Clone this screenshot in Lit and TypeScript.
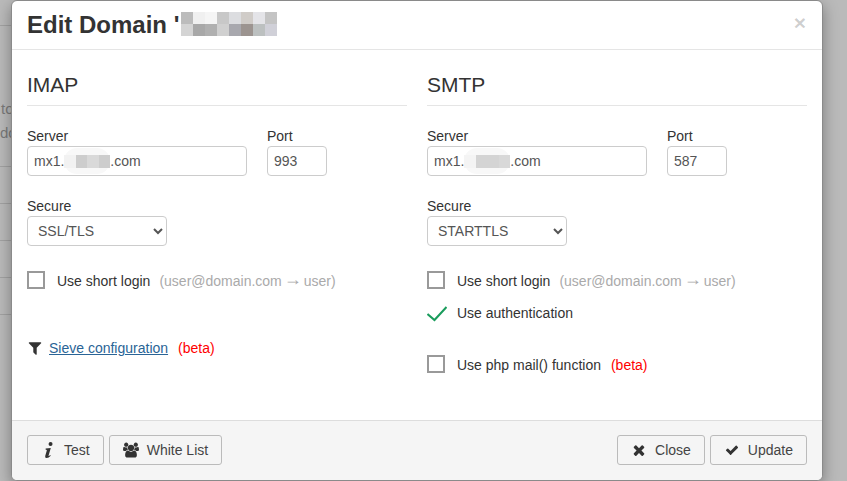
import { LitElement, html, css, svg } from "lit";
import { customElement } from "lit/decorators.js";

const ICONS: Record<string, { box: string; d: string }> = {
  times: {
    box: "0 0 1792 1792",
    d: "M1490 1322q0 40-28 68l-136 136q-28 28-68 28t-68-28l-294-294-294 294q-28 28-68 28t-68-28l-136-136q-28-28-28-68t28-68l294-294-294-294q-28-28-28-68t28-68l136-136q28-28 68-28t68 28l294 294 294-294q28-28 68-28t68 28l136 136q28 28 28 68t-28 68l-294 294 294 294q28 28 28 68z",
  },
  check: {
    box: "0 0 1792 1792",
    d: "M1671 566q0 40-28 68l-724 724-136 136q-28 28-68 28t-68-28l-136-136-362-362q-28-28-28-68t28-68l136-136q28-28 68-28t68 28l294 295 656-657q28-28 68-28t68 28l136 136q28 28 28 68z",
  },
  filter: {
    box: "0 0 1792 1792",
    d: "M1595 295q17 41-14 70l-493 493v742q0 42-39 59-13 5-25 5-27 0-45-19l-256-256q-19-19-19-45v-486l-493-493q-31-29-14-70 17-39 59-39h1280q42 0 59 39z",
  },
  info: {
    box: "0 0 18 18",
    d: "M10.6 1a2 2 0 1 1-.1 4 2 2 0 0 1 .1-4zM5.6 7.6l5.2-.6-2.2 7.4q-.2.7.4.5l1.2-.9.5.8q-2.2 2.4-4.3 2.2-1.7-.2-1.2-2l1.6-5.5q.2-.8-1-.6z",
  },
  users: {
    box: "0 0 1920 1792",
    d: "M593 896q-162 5-265 128h-134q-82 0-138-40.5t-56-118.5q0-353 124-353 6 0 43.5 21t97.5 42.5 119 21.5q67 0 133-23-5 37-5 66 0 139 81 256zm1071 637q0 120-73 189.5t-194 69.5h-874q-121 0-194-69.5t-73-189.5q0-53 3.5-103.5t14-109 26.5-108.5 43-97.5 62-81 85.5-53.5 111.5-20q10 0 43 21.5t73 48 107 48 135 21.5 135-21.5 107-48 73-48 43-21.5q61 0 111.5 20t85.5 53.5 62 81 43 97.5 26.5 108.5 14 109 3.5 103.5zm-1024-1277q0 106-75 181t-181 75-181-75-75-181 75-181 181-75 181 75 75 181zm704 384q0 159-112.5 271.5t-271.5 112.5-271.5-112.5-112.5-271.5 112.5-271.5 271.5-112.5 271.5 112.5 112.5 271.5zm576 225q0 78-56 118.5t-138 40.5h-134q-103-123-265-128 81-117 81-256 0-29-5-66 66 23 133 23 59 0 119-21.5t97.5-42.5 43.5-21q124 0 124 353zm-128-609q0 106-75 181t-181 75-181-75-75-181 75-181 181-75 181 75 75 181z",
  },
};

const icon = (name: string, cls = "") =>
  html`<svg class="fa ${name} ${cls}" viewBox=${ICONS[name].box} aria-hidden="true">${svg`<path d=${ICONS[name].d} fill="currentColor"></path>`}</svg>`;

const TITLE_MOSAIC = [
  "#bcbcbc", "#f0f0f0", "#f5f5f5", "#c8c8c8", "#dcdde0", "#d0ccc8", "#e4e4e8", "#c4c4c4",
  "#d4d4d4", "#a8a8a8", "#b0b0b0", "#d0d0d0", "#a8a8ae", "#9c9490", "#bcc0c0", "#d0d0d8",
];

const tint = (c: string) => html`<i style="background:${c}"></i>`;

@customElement("app-root")
export class AppRoot extends LitElement {
  static styles = css`
    :host {
      display: block;
      position: relative;
      width: 847px;
      height: 481px;
      overflow: hidden;
      background: #bababa;
      font-family: "Liberation Sans", Arial, sans-serif;
      font-size: 14px;
      line-height: 20px;
      color: #333;
    }
    .page { color: #7a7a7a; font-size: 15px; }
    .rule { border-top: 1px solid #a2a2a2; position: absolute; left: 0; width: 12px; }
    .behind { position: absolute; white-space: nowrap; }
    .modal {
      position: absolute;
      left: 11px;
      top: 0;
      width: 812px;
      height: 481px;
      box-sizing: border-box;
      display: flex;
      flex-direction: column;
      background: #fff;
      border: 1px solid #8a8a8a;
      border-radius: 6px;
      box-shadow: 0 5px 15px rgba(0, 0, 0, 0.35);
      overflow: hidden;
    }
    header {
      height: 48px;
      flex: none;
      border-bottom: 1px solid #e5e5e5;
      padding: 0 15px;
      display: flex;
      align-items: center;
      justify-content: space-between;
    }
    h3 { margin: 0; font-size: 24px; line-height: 24px; font-weight: 700; display: flex; align-items: center; white-space: pre; }
    .mosaic { display: grid; grid-template-columns: repeat(8, 12px); grid-auto-rows: 12px; margin: -2px 0 0 2px; }
    .mosaic i { display: block; }
    .x { font-size: 21px; font-weight: 700; color: rgba(0, 0, 0, 0.2); line-height: 20px; margin-top: -5px; margin-right: 1px; }
    main { flex: 1; display: grid; grid-template-columns: 380px 380px; column-gap: 20px; padding: 0 15px; }
    .col { display: flex; flex-direction: column; padding-top: 20px; }
    .legend { font-size: 21px; line-height: 30px; padding-bottom: 5px; border-bottom: 1px solid #e5e5e5; }
    .pair { display: flex; gap: 20px; margin-top: 20px; }
    .secure { margin-top: 20px; }
    .wide { width: 220px; }
    .narrow { width: 60px; }
    .input {
      box-sizing: border-box;
      height: 30px;
      border: 1px solid #ccc;
      border-radius: 4px;
      padding: 0 6px;
      color: #555;
      display: flex;
      align-items: center;
      white-space: pre;
    }
    .blur {
      width: 46px;
      height: 26px;
      display: flex;
      align-items: center;
      background: #f8f8f8;
      border-radius: 13px;
    }
    .blur i { display: block; flex: 1; height: 13px; }
    select {
      display: block;
      box-sizing: border-box;
      width: 140px;
      height: 30px;
      border: 1px solid #ccc;
      border-radius: 4px;
      padding: 0 6px;
      background: #fff;
      color: #555;
      font: inherit;
    }
    .row { display: flex; align-items: center; height: 20px; white-space: pre; }
    .row.first { margin-top: 25px; }
    .row.auth { margin-top: 12px; }
    .row.php { margin-top: 32px; }
    .row.sieve { margin-top: 47px; }
    .box { box-sizing: border-box; width: 18px; height: 18px; border: 2px solid #999; background: #fff; flex: none; margin: -2px 12px 0 0; }
    .tick { width: 20px; height: 16px; flex: none; margin-right: 10px; margin-top: 2px; color: #1a9c5c; }
    .note { color: #aaa; margin-left: 9px; }
    .arrow { font-size: 18px; line-height: 0; margin: 0 2px; vertical-align: 1px; }
    .beta { color: #f00; margin-left: 10px; }
    a { color: #2a6496; text-decoration: underline; }
    footer {
      flex: none;
      height: 60px;
      box-sizing: border-box;
      border-top: 1px solid #ddd;
      background: #f5f5f5;
      padding: 14px 15px 0;
      display: flex;
      gap: 5px;
    }
    button {
      box-sizing: border-box;
      height: 30px;
      padding: 0 13px 0 12px;
      border: 1px solid #bbb;
      border-radius: 3px;
      background: #f5f5f5;
      color: #444;
      font: inherit;
      display: flex;
      align-items: center;
    }
    .spacer { flex: 1; }
    .fa { box-sizing: border-box; width: 18px; height: 18px; flex: none; display: block; color: #333; margin-right: 7px; }
    .fa.info { margin-right: 6px; }
    .fa.users { padding: 1px; }
    .fa.times { padding: 1px; }
    .fa.check { padding: 2px; }
    .fa.filter { width: 16px; height: 16px; margin-right: 6px; }
  `;

  private server(cells: string[]) {
    return html`<div class="input wide" role="textbox">mx1.<span class="blur">${cells.map(tint)}</span>.com</div>`;
  }

  private column(name: string, port: string, secure: string, cells: string[], extra: unknown) {
    return html`<section class="col">
      <div class="legend">${name}</div>
      <div class="pair">
        <div><label>Server</label>${this.server(cells)}</div>
        <div><label>Port</label><div class="input narrow" role="textbox">${port}</div></div>
      </div>
      <div class="secure">
        <label>Secure</label>
        <select>
          <option ?selected=${secure === "SSL/TLS"}>SSL/TLS</option>
          <option ?selected=${secure === "STARTTLS"}>STARTTLS</option>
        </select>
      </div>
      <div class="row first"><span class="box"></span>Use short login<span class="note">(user@domain.com<span class="arrow">→</span>user)</span></div>
      ${extra}
    </section>`;
  }

  render() {
    return html`
      <div class="page" aria-hidden="true">
        <div class="rule" style="top:25px"></div>
        <div class="behind" style="top:99px;left:1px">to</div>
        <div class="behind" style="top:123px;left:0">do</div>
        ${[166, 203, 240, 277, 314].map((y) => html`<div class="rule" style="top:${y}px"></div>`)}
      </div>
      <div class="modal">
        <header>
          <h3>Edit Domain '<span class="mosaic">${TITLE_MOSAIC.map(tint)}</span></h3>
          <span class="x">×</span>
        </header>
        <main>
          ${this.column("IMAP", "993", "SSL/TLS", ["#f2f2f2", "#cdcdcd", "#d9d9d9", "#cdcdcd"],
            html`<div class="row sieve">${icon("filter")}<a href="#">Sieve configuration</a><span class="beta">(beta)</span></div>`)}
          ${this.column("SMTP", "587", "STARTTLS", ["#f4f4f4", "#d4d4d4", "#d4d4d4", "#d8d8d8"],
            html`<div class="row auth"><svg class="tick" viewBox="0 0 20 16" aria-hidden="true"><path d="M0.5 8 L7.5 14 L19.5 1" fill="none" stroke="currentColor" stroke-width="2"></path></svg>Use authentication</div>
              <div class="row php"><span class="box"></span>Use php mail() function<span class="beta">(beta)</span></div>`)}
        </main>
        <footer>
          <button>${icon("info")}Test</button>
          <button>${icon("users")}White List</button>
          <span class="spacer"></span>
          <button>${icon("times")}Close</button>
          <button>${icon("check")}Update</button>
        </footer>
      </div>
    `;
  }
}
